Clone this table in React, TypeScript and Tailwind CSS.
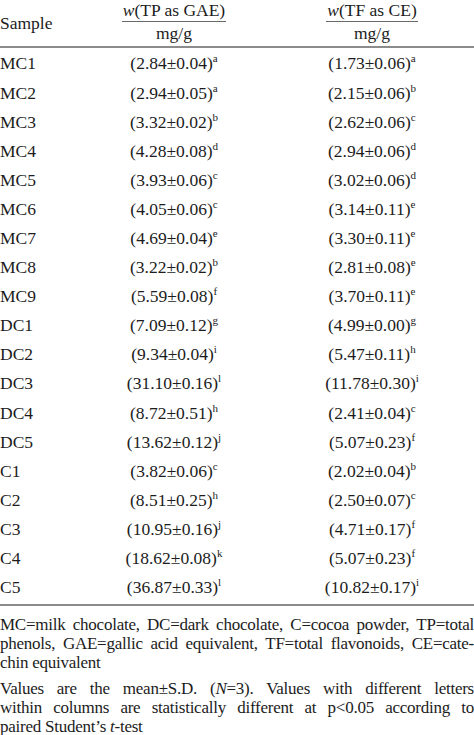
const rows: [string, string, string, string, string][] = [
  ["MC1", "2.84±0.04", "a", "1.73±0.06", "a"],
  ["MC2", "2.94±0.05", "a", "2.15±0.06", "b"],
  ["MC3", "3.32±0.02", "b", "2.62±0.06", "c"],
  ["MC4", "4.28±0.08", "d", "2.94±0.06", "d"],
  ["MC5", "3.93±0.06", "c", "3.02±0.06", "d"],
  ["MC6", "4.05±0.06", "c", "3.14±0.11", "e"],
  ["MC7", "4.69±0.04", "e", "3.30±0.11", "e"],
  ["MC8", "3.22±0.02", "b", "2.81±0.08", "e"],
  ["MC9", "5.59±0.08", "f", "3.70±0.11", "e"],
  ["DC1", "7.09±0.12", "g", "4.99±0.00", "g"],
  ["DC2", "9.34±0.04", "i", "5.47±0.11", "h"],
  ["DC3", "31.10±0.16", "l", "11.78±0.30", "i"],
  ["DC4", "8.72±0.51", "h", "2.41±0.04", "c"],
  ["DC5", "13.62±0.12", "j", "5.07±0.23", "f"],
  ["C1", "3.82±0.06", "c", "2.02±0.04", "b"],
  ["C2", "8.51±0.25", "h", "2.50±0.07", "c"],
  ["C3", "10.95±0.16", "j", "4.71±0.17", "f"],
  ["C4", "18.62±0.08", "k", "5.07±0.23", "f"],
  ["C5", "36.87±0.33", "l", "10.82±0.17", "i"],
];

function Value({ v, sup }: { v: string; sup: string }) {
  return (
    <span className="whitespace-nowrap">
      ({v})<sup className="relative top-[-7px] align-baseline text-[11px]">{sup}</sup>
    </span>
  );
}

export default function App() {
  return (
    <div
      className="h-[735px] w-[474px] overflow-hidden bg-white text-[17.5px] text-[#1c1c1c]"
      style={{ fontFamily: '"Liberation Serif", "Times New Roman", serif' }}
    >
      {/* header */}
      <div className="flex h-[46px] items-stretch">
        <div className="flex w-[96px] items-center pt-[1px]">Sample</div>
        <div className="flex w-[156px] flex-col items-center">
          <div className="h-[22px] border-b border-[#6a6a6a] px-[1px] pt-[1px] leading-[19px]">
            <i>w</i>(TP as GAE)
          </div>
          <div className="flex flex-1 items-center leading-none">mg/g</div>
        </div>
        <div className="w-[20px]" />
        <div className="flex w-[200px] flex-col items-center">
          <div className="h-[22px] border-b border-[#6a6a6a] px-[1px] pt-[1px] leading-[19px]">
            <i>w</i>(TF as CE)
          </div>
          <div className="flex flex-1 items-center leading-none">mg/g</div>
        </div>
      </div>
      <div className="h-[2px] bg-[#8c8c8c]" />

      {/* body */}
      <div className="pt-[1px]">
        {rows.map(([name, a, sa, b, sb]) => (
          <div key={name} className="flex h-[29.1px] items-center">
            <div className="w-[96px]">{name}</div>
            <div className="w-[156px] text-center">
              <Value v={a} sup={sa} />
            </div>
            <div className="w-[20px]" />
            <div className="w-[200px] text-center">
              <Value v={b} sup={sb} />
            </div>
          </div>
        ))}
      </div>
      <div className="mt-[2px] h-[2px] bg-[#8c8c8c]" />

      {/* notes */}
      <div className="mt-[9px] text-[17px] leading-[19px] tracking-[-0.25px]">
        <div className="whitespace-nowrap text-justify [text-align-last:justify]">
          MC=milk chocolate, DC=dark chocolate, C=cocoa powder, TP=total
        </div>
        <div className="whitespace-nowrap text-justify [text-align-last:justify]">
          phenols, GAE=gallic acid equivalent, TF=total flavonoids, CE=cate-
        </div>
        <div>chin equivalent</div>
        <div className="mt-[7px] whitespace-nowrap text-justify [text-align-last:justify]">
          Values are the mean±S.D. (<i>N</i>=3). Values with different letters
        </div>
        <div className="whitespace-nowrap text-justify [text-align-last:justify]">
          within columns are statistically different at p&lt;0.05 according to
        </div>
        <div>
          paired Student’s <i>t</i>-test
        </div>
      </div>
    </div>
  );
}
